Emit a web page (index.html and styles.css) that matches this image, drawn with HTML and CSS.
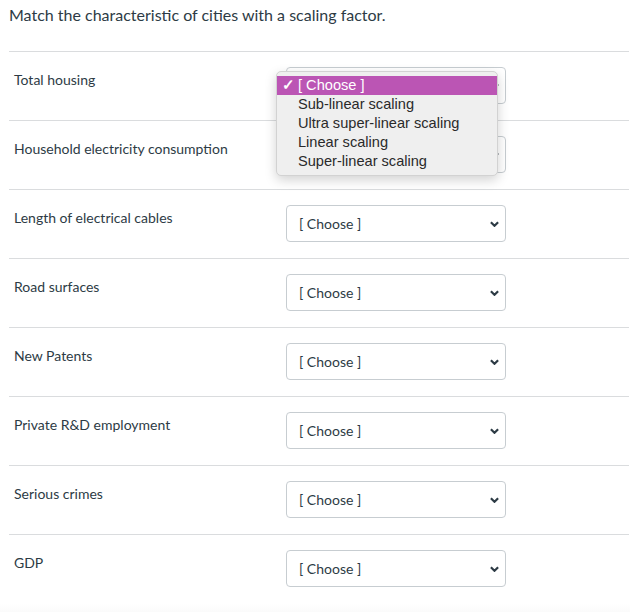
FILE: index.html
```html
<!DOCTYPE html>
<html>
<head>
    <meta charset="UTF-8">
    <title>Matching question</title>
    <link rel="stylesheet" href="styles.css">
</head>
<body>
    <div class="question">
        <p class="question-text">Match the characteristic of cities with a scaling factor.</p>

        <div class="answers">
            <div class="answer-row">
                <div class="answer-label">Total housing</div>
                <div class="select-wrap">
                    <div class="fake-select"></div>
                    <svg class="chevron" viewBox="0 0 10 6"><path d="M1 1 L5 5 L9 1" /></svg>
                    <!-- open option list -->
                    <ul class="option-menu">
                        <li class="active"><span class="tick">✓</span>[ Choose ]</li>
                        <li>Sub-linear scaling</li>
                        <li>Ultra super-linear scaling</li>
                        <li>Linear scaling</li>
                        <li>Super-linear scaling</li>
                    </ul>
                </div>
            </div>
            <div class="answer-row">
                <div class="answer-label">Household electricity consumption</div>
                <div class="select-wrap">
                    <div class="fake-select"></div>
                    <svg class="chevron" viewBox="0 0 10 6"><path d="M1 1 L5 5 L9 1" /></svg>
                </div>
            </div>
            <div class="answer-row">
                <div class="answer-label">Length of electrical cables</div>
                <div class="select-wrap">
                    <div class="fake-select"><span>[ Choose ]</span></div>
                    <svg class="chevron" viewBox="0 0 10 6"><path d="M1 1 L5 5 L9 1" /></svg>
                </div>
            </div>
            <div class="answer-row">
                <div class="answer-label">Road surfaces</div>
                <div class="select-wrap">
                    <div class="fake-select"><span>[ Choose ]</span></div>
                    <svg class="chevron" viewBox="0 0 10 6"><path d="M1 1 L5 5 L9 1" /></svg>
                </div>
            </div>
            <div class="answer-row">
                <div class="answer-label">New Patents</div>
                <div class="select-wrap">
                    <div class="fake-select"><span>[ Choose ]</span></div>
                    <svg class="chevron" viewBox="0 0 10 6"><path d="M1 1 L5 5 L9 1" /></svg>
                </div>
            </div>
            <div class="answer-row">
                <div class="answer-label">Private R&amp;D employment</div>
                <div class="select-wrap">
                    <div class="fake-select"><span>[ Choose ]</span></div>
                    <svg class="chevron" viewBox="0 0 10 6"><path d="M1 1 L5 5 L9 1" /></svg>
                </div>
            </div>
            <div class="answer-row">
                <div class="answer-label">Serious crimes</div>
                <div class="select-wrap">
                    <div class="fake-select"><span>[ Choose ]</span></div>
                    <svg class="chevron" viewBox="0 0 10 6"><path d="M1 1 L5 5 L9 1" /></svg>
                </div>
            </div>
            <div class="answer-row">
                <div class="answer-label">GDP</div>
                <div class="select-wrap">
                    <div class="fake-select"><span>[ Choose ]</span></div>
                    <svg class="chevron" viewBox="0 0 10 6"><path d="M1 1 L5 5 L9 1" /></svg>
                </div>
            </div>
        </div>
    </div>
    <div class="question-footer"></div>
</body>
</html>
```

FILE: styles.css
```css
/* page */
body {
    margin: 0;
    font-family: Lato, "Liberation Sans", sans-serif;
    color: #2d3b45;
    background: #fff;
}

.question {
    padding: 0 1px 0 9px;
}

.question-text {
    margin: 0;
    padding-top: 3px;
    line-height: 24px;
    font-size: 16px;
    margin-bottom: 24px;
}

/* answer rows */
.answer-row {
    display: flex;
    align-items: flex-start;
    border-top: 1px solid #dadcde;
    height: 68px;
}

.answer-label {
    width: 272px;
    padding: 18px 0 0 5px;
    font-size: 14px;
    line-height: 20px;
}

.select-wrap {
    position: relative;
    margin-top: 15px;
}

.fake-select {
    width: 206px;
    height: 35px;
    border: 1px solid #c7cdd1;
    border-radius: 4px;
    background: #fff;
    font-size: 14px;
    display: flex;
    align-items: center;
    padding-left: 12px;
}

.chevron {
    position: absolute;
    right: 7px;
    top: 16px;
    width: 9px;
    height: 6px;
}
.chevron path {
    fill: none;
    stroke: #2d3b45;
    stroke-width: 2.4;
}

/* native-looking option list */
.option-menu {
    position: absolute;
    left: -10px;
    top: 4px;
    width: 220px;
    margin: 0;
    padding: 4px 0;
    list-style: none;
    background: #efefef;
    border: 1px solid #d2d2d2;
    border-radius: 5px;
    box-shadow: 0 4px 12px rgba(0,0,0,0.18);
    font-family: "Liberation Sans", Arial, sans-serif;
    font-size: 14.6px;
    color: #2a2a2a;
    z-index: 5;
}
.option-menu li {
    height: 19px;
    line-height: 19px;
    padding-left: 21px;
    position: relative;
}
.option-menu li.active {
    background: #bb55b4;
    color: #fff;
}
.tick {
    position: absolute;
    left: 5px;
    font-weight: bold;
}

.question-footer {
    height: 20px;
    background: linear-gradient(#fff, #f6f6f6);
}
```
